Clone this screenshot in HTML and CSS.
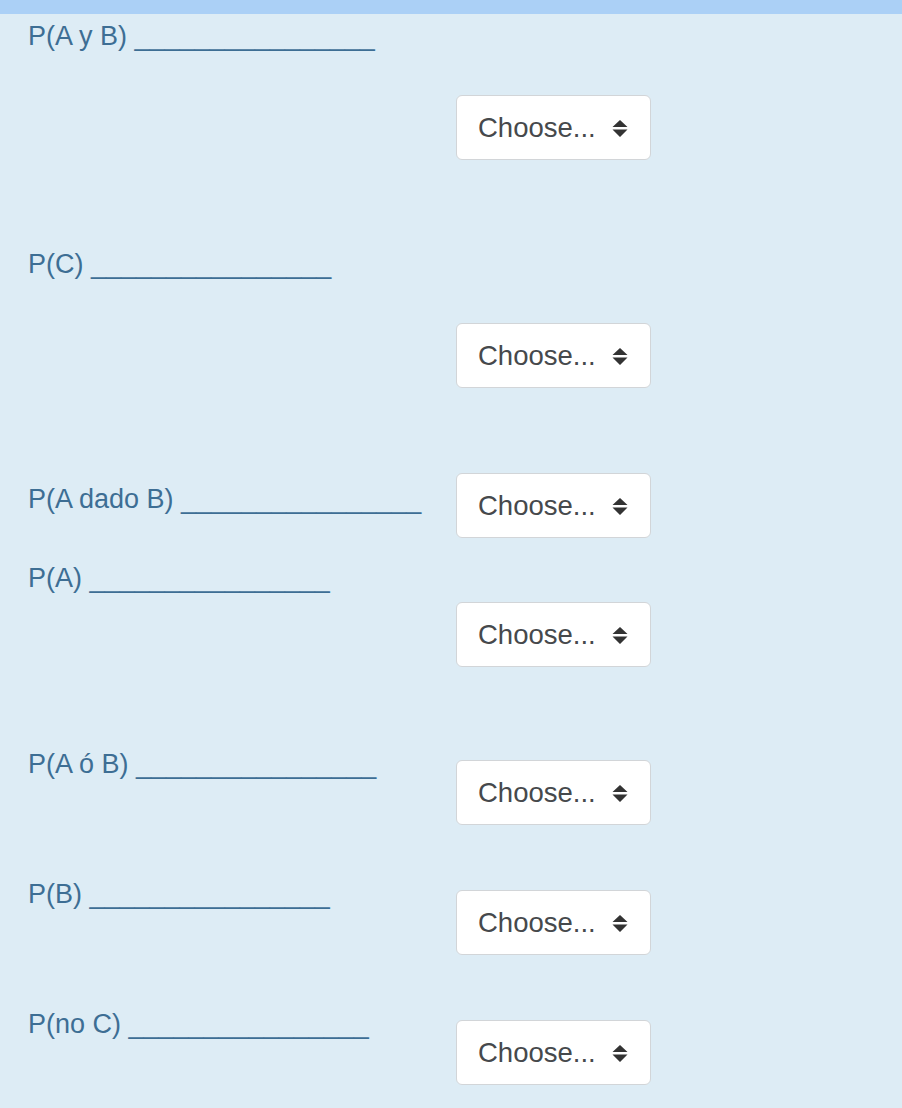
FILE: index.html
```html
<!DOCTYPE html>
<html lang="es">
<head>
<meta charset="utf-8">
<title>Emparejamiento</title>
<link rel="stylesheet" href="styles.css">
</head>
<body>
<div class="topbar"></div>
<div class="answers">
  <div class="row row-a">
    <div class="label">P(A y B) ________________</div>
    <div class="control"><span class="select-wrap"><select class="select"><option>Choose...</option></select><svg class="arrows" width="16" height="18" viewBox="0 0 16 18"><path d="M8 0 L15.5 7 L0.5 7 Z M0.5 9.5 L15.5 9.5 L8 17 Z" fill="#333"/></svg></span></div>
  </div>
  <div class="row row-a">
    <div class="label">P(C) ________________</div>
    <div class="control"><span class="select-wrap"><select class="select"><option>Choose...</option></select><svg class="arrows" width="16" height="18" viewBox="0 0 16 18"><path d="M8 0 L15.5 7 L0.5 7 Z M0.5 9.5 L15.5 9.5 L8 17 Z" fill="#333"/></svg></span></div>
  </div>
  <div class="row row-b">
    <div class="label">P(A dado B) ________________</div>
    <div class="control"><span class="select-wrap"><select class="select"><option>Choose...</option></select><svg class="arrows" width="16" height="18" viewBox="0 0 16 18"><path d="M8 0 L15.5 7 L0.5 7 Z M0.5 9.5 L15.5 9.5 L8 17 Z" fill="#333"/></svg></span></div>
  </div>
  <div class="row row-c">
    <div class="label">P(A) ________________</div>
    <div class="control"><span class="select-wrap"><select class="select"><option>Choose...</option></select><svg class="arrows" width="16" height="18" viewBox="0 0 16 18"><path d="M8 0 L15.5 7 L0.5 7 Z M0.5 9.5 L15.5 9.5 L8 17 Z" fill="#333"/></svg></span></div>
  </div>
  <div class="row row-d">
    <div class="label">P(A ó B) ________________</div>
    <div class="control"><span class="select-wrap"><select class="select"><option>Choose...</option></select><svg class="arrows" width="16" height="18" viewBox="0 0 16 18"><path d="M8 0 L15.5 7 L0.5 7 Z M0.5 9.5 L15.5 9.5 L8 17 Z" fill="#333"/></svg></span></div>
  </div>
  <div class="row row-d">
    <div class="label">P(B) ________________</div>
    <div class="control"><span class="select-wrap"><select class="select"><option>Choose...</option></select><svg class="arrows" width="16" height="18" viewBox="0 0 16 18"><path d="M8 0 L15.5 7 L0.5 7 Z M0.5 9.5 L15.5 9.5 L8 17 Z" fill="#333"/></svg></span></div>
  </div>
  <div class="row row-d">
    <div class="label">P(no C) ________________</div>
    <div class="control"><span class="select-wrap"><select class="select"><option>Choose...</option></select><svg class="arrows" width="16" height="18" viewBox="0 0 16 18"><path d="M8 0 L15.5 7 L0.5 7 Z M0.5 9.5 L15.5 9.5 L8 17 Z" fill="#333"/></svg></span></div>
  </div>
</div>
</body>
</html>
```

FILE: styles.css
```css
html, body {
  margin: 0;
  padding: 0;
}
body {
  background: #ddecf5;
  font-family: "Liberation Sans", Arial, Helvetica, sans-serif;
  height: 1108px;
  overflow: hidden;
}
.topbar {
  height: 14px;
  background: #abd0f6;
}
.answers {
  padding-left: 28px;
}
.row {
  display: flex;
  align-items: flex-start;
  box-sizing: border-box;
}
.label {
  width: 428px;
  flex: none;
  padding-top: 6px;
  font-size: 27px;
  line-height: 32px;
  color: #3d6e94;
  white-space: nowrap;
}
.control {
  flex: none;
}
.row-a { min-height: 228px; }
.row-a .control { margin-top: 81px; }
.row-b { min-height: 86px; }
.row-b .label { padding-top: 13px; }
.row-b .control { margin-top: 3px; }
.row-c { min-height: 186px; }
.row-c .control { margin-top: 46px; }
.row-d { min-height: 130px; }
.row-d .control { margin-top: 18px; }

.select-wrap {
  position: relative;
  display: block;
  width: 195px;
  height: 65px;
}
.select {
  -webkit-appearance: none;
  appearance: none;
  display: block;
  box-sizing: border-box;
  width: 195px;
  height: 65px;
  margin: 0;
  padding: 0 0 0 21px;
  border: 1px solid #d2d5d8;
  border-radius: 6px;
  background: #ffffff;
  font-family: "Liberation Sans", Arial, Helvetica, sans-serif;
  font-size: 27.5px;
  color: #46494c;
  outline: none;
}
.arrows {
  position: absolute;
  left: 156px;
  top: 25px;
  pointer-events: none;
}
```
